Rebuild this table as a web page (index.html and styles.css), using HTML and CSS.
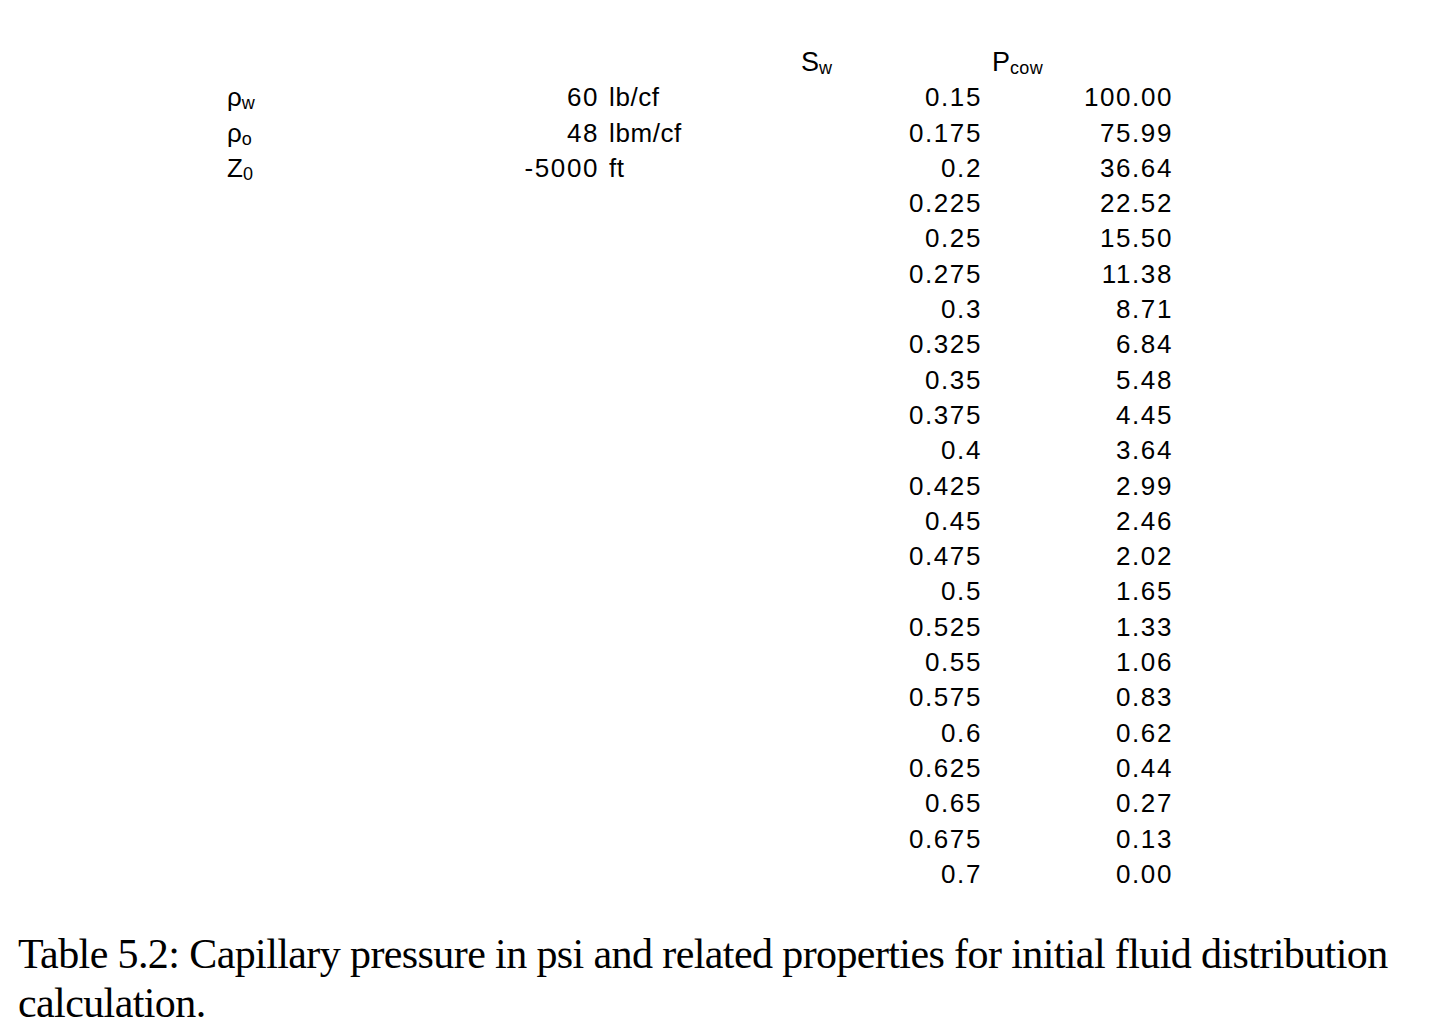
FILE: index.html
```html
<!DOCTYPE html>
<html lang="en">
<head>
<meta charset="utf-8">
<title>Table 5.2</title>
<link rel="stylesheet" href="styles.css">
</head>
<body>
<div class="sheet">
  <div class="cell"></div><div class="cell"></div><div class="cell"></div>
  <div class="cell head">S<span class="sub">w</span></div>
  <div class="cell head">P<span class="sub wide">cow</span></div>

  <div class="cell label">ρ<span class="sub">w</span></div>
  <div class="cell num">60</div>
  <div class="cell unit">lb/cf</div>
  <div class="cell num">0.15</div>
  <div class="cell num">100.00</div>

  <div class="cell label">ρ<span class="sub">o</span></div>
  <div class="cell num">48</div>
  <div class="cell unit">lbm/cf</div>
  <div class="cell num">0.175</div>
  <div class="cell num">75.99</div>

  <div class="cell label">Z<span class="sub">0</span></div>
  <div class="cell num">-5000</div>
  <div class="cell unit">ft</div>
  <div class="cell num">0.2</div>
  <div class="cell num">36.64</div>

  <div class="cell d">0.225</div><div class="cell num">22.52</div>
  <div class="cell d">0.25</div><div class="cell num">15.50</div>
  <div class="cell d">0.275</div><div class="cell num">11.38</div>
  <div class="cell d">0.3</div><div class="cell num">8.71</div>
  <div class="cell d">0.325</div><div class="cell num">6.84</div>
  <div class="cell d">0.35</div><div class="cell num">5.48</div>
  <div class="cell d">0.375</div><div class="cell num">4.45</div>
  <div class="cell d">0.4</div><div class="cell num">3.64</div>
  <div class="cell d">0.425</div><div class="cell num">2.99</div>
  <div class="cell d">0.45</div><div class="cell num">2.46</div>
  <div class="cell d">0.475</div><div class="cell num">2.02</div>
  <div class="cell d">0.5</div><div class="cell num">1.65</div>
  <div class="cell d">0.525</div><div class="cell num">1.33</div>
  <div class="cell d">0.55</div><div class="cell num">1.06</div>
  <div class="cell d">0.575</div><div class="cell num">0.83</div>
  <div class="cell d">0.6</div><div class="cell num">0.62</div>
  <div class="cell d">0.625</div><div class="cell num">0.44</div>
  <div class="cell d">0.65</div><div class="cell num">0.27</div>
  <div class="cell d">0.675</div><div class="cell num">0.13</div>
  <div class="cell d">0.7</div><div class="cell num">0.00</div>
</div>
<p class="caption">Table 5.2: Capillary pressure in psi and related properties for initial fluid distribution calculation.</p>
</body>
</html>
```

FILE: styles.css
```css
html, body {
  margin: 0;
  padding: 0;
  background: #ffffff;
  color: #000000;
}

.sheet {
  display: grid;
  grid-template-columns: 191px 192px 192px 191px 191px;
  grid-auto-rows: 35.3px;
  margin: 45px 0 0 220px;
  width: max-content;
  font-family: "Liberation Sans", Arial, sans-serif;
  font-size: 26px;
  line-height: 35.3px;
  letter-spacing: 1.6px;
}

.cell {
  padding: 0 4px 0 6px;
  white-space: nowrap;
}

.num {
  text-align: right;
}

.d {
  grid-column: 4;
  text-align: right;
}

.unit {
  text-align: left;
  padding-left: 6px;
  letter-spacing: 0.6px;
}

.label {
  letter-spacing: 0;
  padding-left: 7px;
}

.head {
  letter-spacing: 0;
  font-size: 27px;
}

.sub {
  font-size: 18px;
  position: relative;
  top: 3px;
  letter-spacing: 0;
}

.sub.wide {
  letter-spacing: 0.3px;
}

.caption {
  margin: 38px 0 0 18px;
  width: 1420px;
  font-family: "Liberation Serif", "Times New Roman", serif;
  font-size: 42px;
  line-height: 49px;
  letter-spacing: -0.6px;
}
```
